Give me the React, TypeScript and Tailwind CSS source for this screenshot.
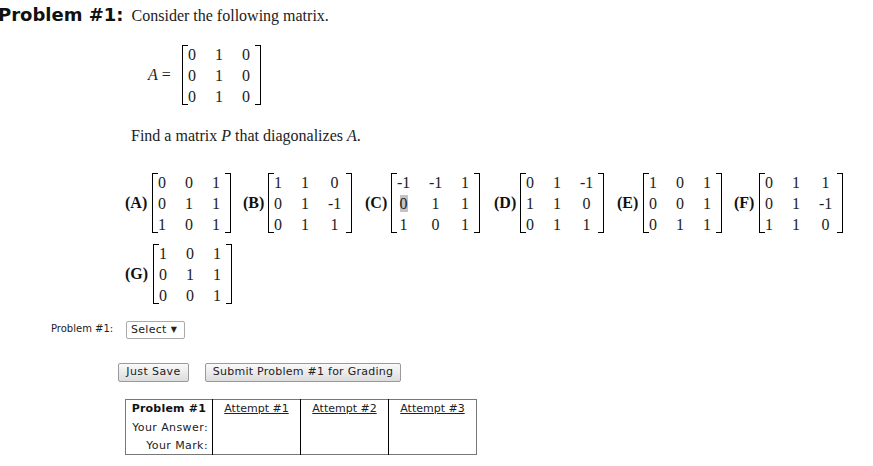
const serif = "font-['Liberation_Serif',serif]";
const sans = "font-['DejaVu_Sans',sans-serif]";

function Bracket({ side }: { side: "l" | "r" }) {
  return (
    <div
      className={
        side === "l"
          ? "w-[6px] shrink-0 border-l border-t border-b border-black"
          : "w-[6px] shrink-0 border-r border-t border-b border-black"
      }
    />
  );
}

function Matrix({ rows, widths }: { rows: string[][]; widths: string }) {
  return (
    <div className="flex h-[60px]">
      <Bracket side="l" />
      <div className={"grid content-center gap-x-[19px] pr-[5px] text-[16px] leading-[21px] text-center text-[#222] " + widths}>
        {rows.flat().map((c, i) =>
          c === "0*" ? (
            <span key={i}>
              <span className="bg-[#c4c4c4]">0</span>
            </span>
          ) : (
            <span key={i}>{c}</span>
          ),
        )}
      </div>
      <Bracket side="r" />
    </div>
  );
}

function Choice({
  label,
  rows,
  widths,
  labelW,
  mr,
}: {
  label: string;
  rows: string[][];
  widths: string;
  labelW: string;
  mr: string;
}) {
  return (
    <div className={"flex items-center " + mr}>
      <b className={"text-[16px] text-[#111] " + labelW}>{label}</b>
      <Matrix rows={rows} widths={widths} />
    </div>
  );
}

const btn =
  "h-[19px] border border-[#9a9a9a] rounded-[2px] bg-gradient-to-b from-[#fafafa] to-[#dcdcdc] text-[11px] text-[#222] flex items-center justify-center";

export default function App() {
  return (
    <div className="w-[873px] h-[466px] bg-white overflow-hidden text-black">
      <div className="flex items-baseline pt-[3px] -ml-[2px]">
        <h1 className={sans + " font-bold text-[18px] leading-[24px] text-[#111]"}>Problem #1:</h1>
        <p className={serif + " ml-[8px] text-[16px] text-[#222]"}>Consider the following matrix.</p>
      </div>

      <div className={serif + " pl-[131px]"}>
        <div className="flex items-center mt-[17px] ml-[17px]">
          <span className="text-[16px] text-[#222] w-[34px]">
            <i>A</i> =
          </span>
          <Matrix
            rows={[
              ["0", "1", "0"],
              ["0", "1", "0"],
              ["0", "1", "0"],
            ]}
            widths="grid-cols-[8px_8px_8px]"
          />
        </div>
        <p className="mt-[19px] text-[16px] text-[#222] leading-[24px]">
          Find a matrix <i>P</i> that diagonalizes <i>A</i>.
        </p>
      </div>

      <div className={serif + " pl-[125px] mt-[25px]"}>
        <div className="flex">
          <Choice label="(A)" labelW="w-[27px]" mr="mr-[12px]" widths="grid-cols-[8px_8px_8px]"
            rows={[["0","0","1"],["0","1","1"],["1","0","1"]]} />
          <Choice label="(B)" labelW="w-[25px]" mr="mr-[13px]" widths="grid-cols-[8px_8px_13px]"
            rows={[["1","1","0"],["0","1","-1"],["0","1","1"]]} />
          <Choice label="(C)" labelW="w-[26px]" mr="mr-[14px]" widths="grid-cols-[13px_13px_8px]"
            rows={[["-1","-1","1"],["0*","1","1"],["1","0","1"]]} />
          <Choice label="(D)" labelW="w-[26px]" mr="mr-[13px]" widths="grid-cols-[8px_8px_13px]"
            rows={[["0","1","-1"],["1","1","0"],["0","1","1"]]} />
          <Choice label="(E)" labelW="w-[26px]" mr="mr-[12px]" widths="grid-cols-[8px_8px_8px]"
            rows={[["1","0","1"],["0","0","1"],["0","1","1"]]} />
          <Choice label="(F)" labelW="w-[25px]" mr="" widths="grid-cols-[8px_8px_13px]"
            rows={[["0","1","1"],["0","1","-1"],["1","1","0"]]} />
        </div>
        <div className="flex mt-[11px]">
          <Choice label="(G)" labelW="w-[28px]" mr="" widths="grid-cols-[8px_8px_8px]"
            rows={[["1","0","1"],["0","1","1"],["0","0","1"]]} />
        </div>
      </div>

      <div className={sans + " flex items-center mt-[17px] pl-[51px]"}>
        <span className="text-[10px] text-[#222] w-[75px] pb-[3px]">Problem #1:</span>
        <div className="h-[18px] w-[59px] border border-[#aaa] rounded-[2px] text-[11px] tracking-[0.3px] text-[#222] flex items-center pl-[4px]">
          Select <span className="ml-[4px] text-[8px]">▼</span>
        </div>
      </div>

      <div className={sans + " flex pl-[118px] gap-[16px] mt-[24px]"}>
        <button className={btn + " w-[71px] tracking-[0.4px]"}>Just Save</button>
        <button className={btn + " w-[196px] tracking-[0.25px]"}>Submit Problem #1 for Grading</button>
      </div>

      <table className={sans + " ml-[125px] mt-[17px] w-[352px] h-[55px] table-fixed border-collapse border border-[#777] text-[11px] text-[#222]"}>
        <colgroup>
          <col className="w-[87px]" />
          <col className="w-[88px]" />
          <col className="w-[88px]" />
          <col className="w-[88px]" />
        </colgroup>
        <tbody>
          <tr className="h-[19px]">
            <td className="text-right pr-[6px] font-bold text-[#111] border-r border-black tracking-[0.2px]">Problem #1</td>
            <td className="text-center underline border-r border-black">Attempt #1</td>
            <td className="text-center underline border-r border-black">Attempt #2</td>
            <td className="text-center underline">Attempt #3</td>
          </tr>
          <tr className="h-[19px]">
            <td className="text-right pr-[4px] border-r border-black tracking-[0.4px]">Your Answer:</td>
            <td className="border-r border-black"></td>
            <td className="border-r border-black"></td>
            <td></td>
          </tr>
          <tr className="h-[17px]">
            <td className="text-right pr-[4px] border-r border-black tracking-[0.4px]">Your Mark:</td>
            <td className="border-r border-black"></td>
            <td className="border-r border-black"></td>
            <td></td>
          </tr>
        </tbody>
      </table>
    </div>
  );
}
